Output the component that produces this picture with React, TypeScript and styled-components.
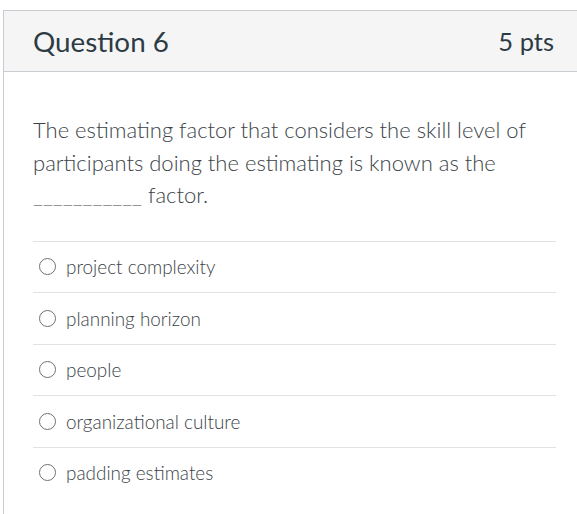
import styled, { createGlobalStyle } from "styled-components";

const GlobalStyle = createGlobalStyle`
  html, body {
    margin: 0;
    padding: 0;
    background: #ffffff;
    overflow: hidden;
  }
  body {
    font-family: Lato, "Open Sans", "Liberation Sans", sans-serif;
    color: #2d3b45;
  }
`;

const Page = styled.div`
  padding: 10px 0 0 3px;
  width: 600px;
  height: 514px;
  box-sizing: border-box;
`;

const Card = styled.div`
  width: 582px;
  height: 520px;
  border: 1px solid #c7cdd1;
  border-bottom: none;
  box-sizing: border-box;
`;

const Header = styled.div`
  display: flex;
  justify-content: space-between;
  align-items: center;
  height: 61px;
  padding: 0 30px 0 29px;
  background: #f5f5f5;
  border-bottom: 1px solid #c7cdd1;
  box-sizing: border-box;
`;

const Title = styled.h2`
  margin: 0;
  font-size: 27.8px;
  font-weight: 400;
  color: #2d3b45;
`;

const Points = styled.span`
  font-size: 25.5px;
  color: #2d3b45;
`;

const Body = styled.div`
  padding: 42px 28px 0 29px;
`;

const Prompt = styled.p`
  margin: 0 0 29px;
  font-size: 22px;
  font-weight: 300;
  line-height: 32.5px;
  color: #3b4348;
`;

const Answers = styled.div`
  display: flex;
  flex-direction: column;
`;

const Answer = styled.label`
  display: flex;
  align-items: center;
  height: 51.5px;
  padding-left: 6px;
  border-top: 1px solid #e2e2e2;
  font-size: 18.9px;
  font-weight: 300;
  color: #3b4348;
  box-sizing: border-box;
`;

const Radio = styled.span`
  width: 17px;
  height: 17px;
  border: 1.5px solid #6c7276;
  border-radius: 50%;
  box-sizing: border-box;
  margin-right: 10px;
  flex-shrink: 0;
`;

const options = [
  "project complexity",
  "planning horizon",
  "people",
  "organizational culture",
  "padding estimates",
];

export default function App() {
  return (
    <>
      <GlobalStyle />
      <Page>
        <Card>
          <Header>
            <Title>Question 6</Title>
            <Points>5 pts</Points>
          </Header>
          <Body>
            <Prompt>
              The estimating factor that considers the skill level of
              participants doing the estimating is known as the
              <br />
              ___________ factor.
            </Prompt>
            <Answers>
              {options.map((o) => (
                <Answer key={o}>
                  <Radio />
                  {o}
                </Answer>
              ))}
            </Answers>
          </Body>
        </Card>
      </Page>
    </>
  );
}
